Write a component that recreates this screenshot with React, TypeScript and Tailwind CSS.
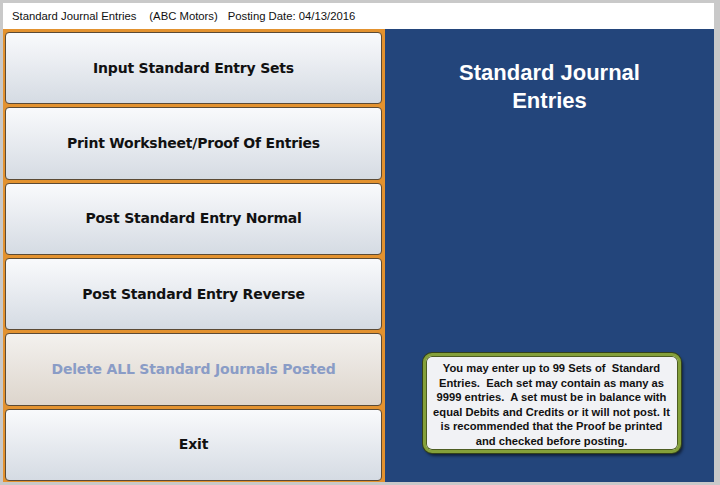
const BUTTONS = [
  { label: 'Input Standard Entry Sets' },
  { label: 'Print Worksheet/Proof Of Entries' },
  { label: 'Post Standard Entry Normal' },
  { label: 'Post Standard Entry Reverse' },
  { label: 'Delete ALL Standard Journals Posted', disabled: true },
  { label: 'Exit' },
];

function MenuButton({ label, disabled }: { label: string; disabled?: boolean }) {
  return (
    <button
      className={
        'flex-1 rounded-[4px] border border-[#5b4a35] flex items-center justify-center text-[14px] font-bold tracking-[-0.2px] ' +
        (disabled
          ? 'bg-gradient-to-b from-[#f3f1ee] to-[#ddd5cc] text-[#8a9cc6]'
          : 'bg-gradient-to-b from-[#f9fafc] to-[#d5dbe3] text-[#111]')
      }
      style={{ fontFamily: 'Tahoma, "DejaVu Sans", sans-serif' }}
    >
      {label}
    </button>
  );
}

export default function App() {
  return (
    <div className="w-[720px] h-[485px] bg-[#c9c9c9] pt-[3px] pl-[3px] pr-[6px] pb-[3px] flex flex-col overflow-hidden">
      {/* Title bar */}
      <div
        className="h-[26px] bg-white flex items-center pl-[9px] text-[11.3px] text-[#111]"
        style={{ fontFamily: '"Liberation Sans", Arial, sans-serif' }}
      >
        <span>Standard Journal Entries</span>
        <span className="ml-[13px]">(ABC Motors)</span>
        <span className="ml-[10px]">Posting Date: 04/13/2016</span>
      </div>

      <div className="flex-1 flex">
        {/* Menu */}
        <div className="w-[382px] bg-[#e3922f] flex flex-col gap-[3px] pl-[2px] pr-[3px] pt-[3px] pb-[1px]">
          {BUTTONS.map((b) => (
            <MenuButton key={b.label} label={b.label} disabled={b.disabled} />
          ))}
        </div>

        {/* Info panel */}
        <div
          className="flex-1 bg-[#23457b] flex flex-col items-center"
          style={{ fontFamily: '"Liberation Sans", Arial, sans-serif' }}
        >
          <h1 className="mt-[30px] text-white text-[22px] font-bold leading-[28px] text-center">
            Standard Journal
            <br />
            Entries
          </h1>
          <div className="mt-auto mb-[29px] ml-[4px] w-[258px] h-[100px] rounded-[9px] border-[3px] border-[#84a03a] shadow-[0_0_0_1px_#34421a,inset_0_0_0_1px_#4d5d22,2px_3px_3px_rgba(0,0,0,0.55)] bg-[#f1f2f5] px-[4px] pt-[5px] text-center text-[11.2px] font-bold leading-[14.5px] text-[#111]">
            You may enter up to 99 Sets of&nbsp; Standard Entries.&nbsp; Each set may contain as many as 9999 entries.&nbsp; A set must be in balance with equal Debits and Credits or it will not post. It is recommended that the Proof be printed and checked before posting.
          </div>
        </div>
      </div>
    </div>
  );
}
